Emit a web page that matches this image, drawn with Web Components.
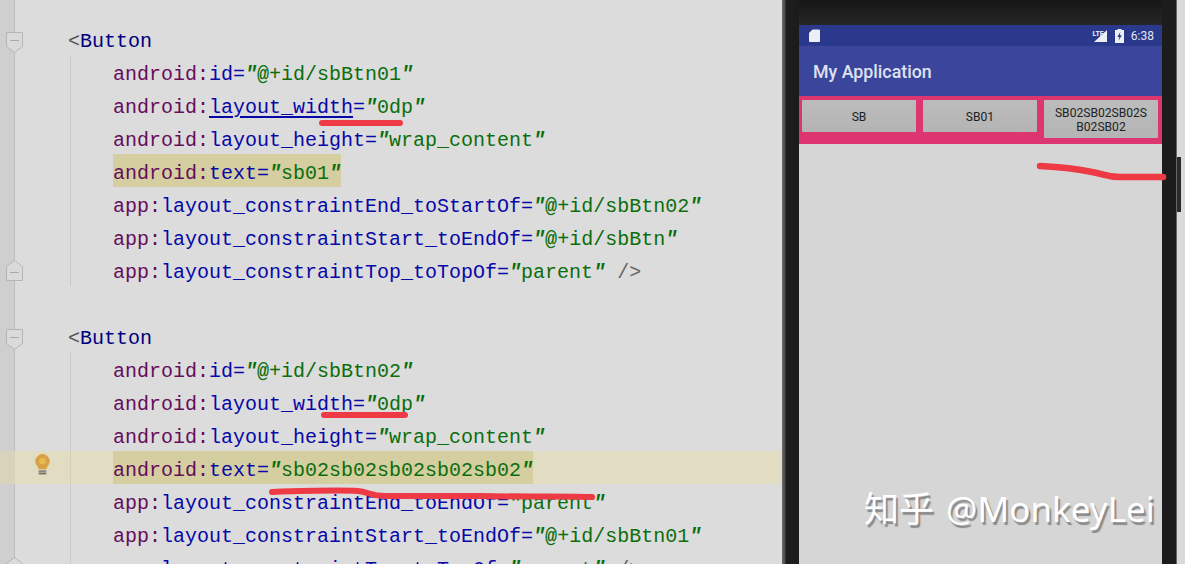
<!DOCTYPE html>
<html><head><meta charset="utf-8">
<style>
html,body{margin:0;padding:0;width:1185px;height:564px;overflow:hidden;background:#dcdcdc}
body{display:flex;position:relative}
</style></head>
<body>
<code-editor>
  <code-line tag="Button" fold="open"></code-line>
  <code-line guide ns="android" name="id" value="@+id/sbBtn01"></code-line>
  <code-line guide ns="android" name="layout_width" value="0dp" link></code-line>
  <code-line guide ns="android" name="layout_height" value="wrap_content"></code-line>
  <code-line guide ns="android" name="text" value="sb01" mark></code-line>
  <code-line guide ns="app" name="layout_constraintEnd_toStartOf" value="@+id/sbBtn02"></code-line>
  <code-line guide ns="app" name="layout_constraintStart_toEndOf" value="@+id/sbBtn"></code-line>
  <code-line guide ns="app" name="layout_constraintTop_toTopOf" value="parent" tail=" />" fold="close"></code-line>
  <code-line></code-line>
  <code-line tag="Button" fold="open"></code-line>
  <code-line guide ns="android" name="id" value="@+id/sbBtn02"></code-line>
  <code-line guide ns="android" name="layout_width" value="0dp"></code-line>
  <code-line guide ns="android" name="layout_height" value="wrap_content"></code-line>
  <code-line guide ns="android" name="text" value="sb02sb02sb02sb02sb02" mark current bulb></code-line>
  <code-line guide ns="app" name="layout_constraintEnd_toEndOf" value="parent"></code-line>
  <code-line guide ns="app" name="layout_constraintStart_toEndOf" value="@+id/sbBtn01"></code-line>
  <code-line guide ns="app" name="layout_constraintTop_toTopOf" value="parent" tail=" />" fold="close"></code-line>
</code-editor>
<phone-frame>
  <status-bar></status-bar>
  <app-bar>My Application</app-bar>
  <button-row>
    <app-button>SB</app-button>
    <app-button>SB01</app-button>
    <app-button>SB02SB02SB02SB02SB02</app-button>
  </button-row>
</phone-frame>
<ink-marks></ink-marks>
<water-mark>知乎 @MonkeyLei</water-mark>
<script>
function def(name, css, html){
  customElements.define(name, class extends HTMLElement{
    connectedCallback(){
      if(this.shadowRoot) return;
      const r=this.attachShadow({mode:'open'});
      r.innerHTML='<style>'+css+'</style>'+(typeof html==='function'?html(this):html);
    }
  });
}
const esc=s=>s.replace(/&/g,'&amp;').replace(/</g,'&lt;').replace(/>/g,'&gt;');

def('code-editor',`
:host{display:block;flex:0 0 782px;height:564px;overflow:hidden;box-sizing:border-box;padding-top:22px;
background:linear-gradient(90deg,#cfcfcf 0,#cfcfcf 14px,#bdbdbd 14px,#bdbdbd 15px,#dcdcdc 15px);}
`,`<slot></slot>`);

const foldSvg=(dir)=>dir==='open'
 ?`<svg class="fold" width="18" height="22" viewBox="0 0 18 22" style="top:10px"><path d="M.5.5h16v14l-8 6-8-6z" fill="#dadada" stroke="#b5b5b5"/><path d="M4 8.500h9" stroke="#aaa"/></svg>`
 :`<svg class="fold" width="18" height="22" viewBox="0 0 18 22" style="top:6px"><path d="M.5 21.500h16v-14l-8-6-8 6z" fill="#dadada" stroke="#b5b5b5"/><path d="M4 13.500h9" stroke="#aaa"/></svg>`;
const bulbSvg=`<svg class="bulb" width="17" height="23" viewBox="0 0 18 24" style="position:absolute;left:34px;top:2px">
<path d="M9 1a7.600 7.600 0 0 0-7.600 7.600c0 3 1.800 4.500 2.800 6.400.4.800.5 1.500.5 2h8.600c0-.5.100-1.200.5-2 1-1.900 2.800-3.400 2.800-6.400A7.600 7.600 0 0 0 9 1z" fill="#d9a046"/>
<circle cx="9" cy="8.500" r="3.500" fill="#e4bd50"/><rect x="5" y="18" width="8" height="2" fill="#8b8b80"/><rect x="5" y="20.500" width="8" height="2" fill="#6f6f68"/></svg>`;

def('code-line',`
:host{display:grid;grid-template-columns:71px 1fr;grid-template-rows:33px;height:33px;position:relative;
font:20px/39px "Liberation Mono",monospace;white-space:pre;}
:host([current]){background:linear-gradient(90deg,#d8d3ba 0,#d8d3ba 15px,#e1dcc2 15px);}
.g{position:relative;height:33px}
:host([guide]) .g{border-right:1px solid #c9c9c9;box-sizing:border-box}
:host([current]) .g{border-right-color:#d3ceb6}
.fold{position:absolute;left:6px}
.c{padding-left:42px;color:#000080}
.c.t{padding-left:0;margin-left:-3px}
.lt{color:#555}
.ns{color:#660e5a}.nm{color:#0808a8}.eq{color:#0808a8}
.v{color:#0c6e0c}.v i{font-style:italic;font-weight:700}.v b{font-weight:700}
.m{display:inline-block;height:33px;background:#d4cea0}
.u{text-decoration:underline;text-underline-offset:3px}
.end{color:#666}
`,(h)=>{
  const a=n=>h.getAttribute(n);
  let gut='';
  if(a('fold')) gut+=foldSvg(a('fold'));
  if(h.hasAttribute('bulb')) gut+=bulbSvg;
  let body='';
  if(a('tag')) body=`<div class="c t"><span class="lt">&lt;</span>${a('tag')}</div>`;
  else if(a('ns')){
    const val=esc(a('value')).replace('@','<b>@</b>');
    let inner=`<span class="ns">${a('ns')}:</span><span class="nm${h.hasAttribute('link')?' u':''}">${a('name')}</span><span class="eq">=</span><span class="v"><i>"</i>${val}<i>"</i></span>`;
    if(h.hasAttribute('mark')) inner=`<span class="m">${inner}</span>`;
    body=`<div class="c">${inner}${a('tail')?`<span class="end">${esc(a('tail'))}</span>`:''}</div>`;
  } else body='<div class="c"></div>';
  return `<div class="g">${gut}</div>${body}`;
});

def('phone-frame',`
:host{display:flex;flex:0 0 403px;height:564px;background:#dadada}
.edge{flex:0 0 17px;background:linear-gradient(90deg,#6a6a6a 0,#4a4a4a 3px,#1d1d1d 4px,#1b1b1b 100%)}
.body{flex:0 0 363px;display:flex;flex-direction:column;background:linear-gradient(#161616,#272727 25px);padding-top:25px;box-sizing:border-box}
.screen{flex:1;background:#d6d6d6;display:flex;flex-direction:column}
.redge{flex:0 0 15px;background:#1c1c1c;border-right:1px solid #666;box-sizing:border-box}
.out{flex:0 0 8px;padding-top:157px;box-sizing:border-box}
.pw{width:4px;height:55px;background:#2a2a2a}
`,`<div class="edge"></div><div class="body"><div class="screen"><slot></slot></div></div><div class="redge"></div><div class="out"><div class="pw"></div></div>`);

def('status-bar',`
:host{display:flex;align-items:center;height:21px;background:#2a398c;padding:0 8px 0 10px;color:#e4e6f2;font:400 12px Roboto,sans-serif}
.sp{flex:1}
svg{display:block}
.time{margin-left:7px}
`,`<svg width="11" height="13" viewBox="0 0 11 13"><path d="M3.500.500H10a1 1 0 0 1 1 1V12a1 1 0 0 1-1 1H1a1 1 0 0 1-1-1V4z" fill="#eceef6"/></svg>
<span class="sp"></span>
<svg width="16" height="13" viewBox="0 0 16 13"><path d="M15 1v12H2z" fill="#eceef6"/><text x="0.500" y="6.500" font-family="Roboto" font-size="7" font-weight="700" fill="#eceef6">LTE</text></svg>
<svg width="9" height="14" viewBox="0 0 9 14" style="margin-left:7px"><path d="M2.500 0h4v1H9v13H0V1h2.500z" fill="#eceef6"/><path d="M5.300 3 2.300 8h2l-.6 3.500L6.800 6.300H4.800z" fill="#2a398c"/></svg>
<span class="time">6:38</span>`);

def('app-bar',`
:host{display:flex;align-items:center;height:50px;background:#3a459b;color:#dfe1f0;padding-left:14px;font:500 17.800px Roboto,sans-serif}
`,`<slot></slot>`);

def('button-row',`
:host{display:grid;grid-template-columns:114px 114px 114px;column-gap:7px;align-items:start;background:#dc356f;padding:4px 3px 5px;height:48px;box-sizing:border-box}
`,`<slot></slot>`);

def('app-button',`
:host{display:block;min-height:32px;box-sizing:border-box;background:linear-gradient(#bcbcbc,#b4b4b4);border-radius:1px;color:#222;
font:12.100px/14px Roboto,sans-serif;text-align:center;padding:10px 8px 8px;overflow-wrap:anywhere}
:host(:last-child){min-height:38px;padding-top:6px;padding-bottom:4px}
`,`<slot></slot>`);

def('ink-marks',`
:host{position:absolute;left:0;top:0;width:1185px;height:564px;display:block;pointer-events:none}
svg{display:block}
path{fill:none;stroke:#ee3a44;stroke-linecap:round;stroke-linejoin:round}
`,`<svg width="1185" height="564" viewBox="0 0 1185 564">
<path stroke-width="6" d="M322 123H400"/>
<path stroke-width="6" d="M324 415H405"/>
<path stroke-width="6" d="M272 492C300 491 340 490 358 491 368 492 372 496 385 496H480C530 497 570 496 592 497"/>
<path stroke-width="6.500" d="M1040 166C1060 167 1078 169 1092 172 1104 174 1105 177 1120 177H1163"/>
</svg>`);

def('water-mark',`
:host{position:absolute;left:864px;top:487px;display:block;color:#fff;white-space:nowrap;word-spacing:3px;
font:35px/44px "Noto Sans","Noto Sans CJK SC",sans-serif;text-shadow:2px 3px 1px #8a8a8a}
`,`<slot></slot>`);
</script>
</body></html>
